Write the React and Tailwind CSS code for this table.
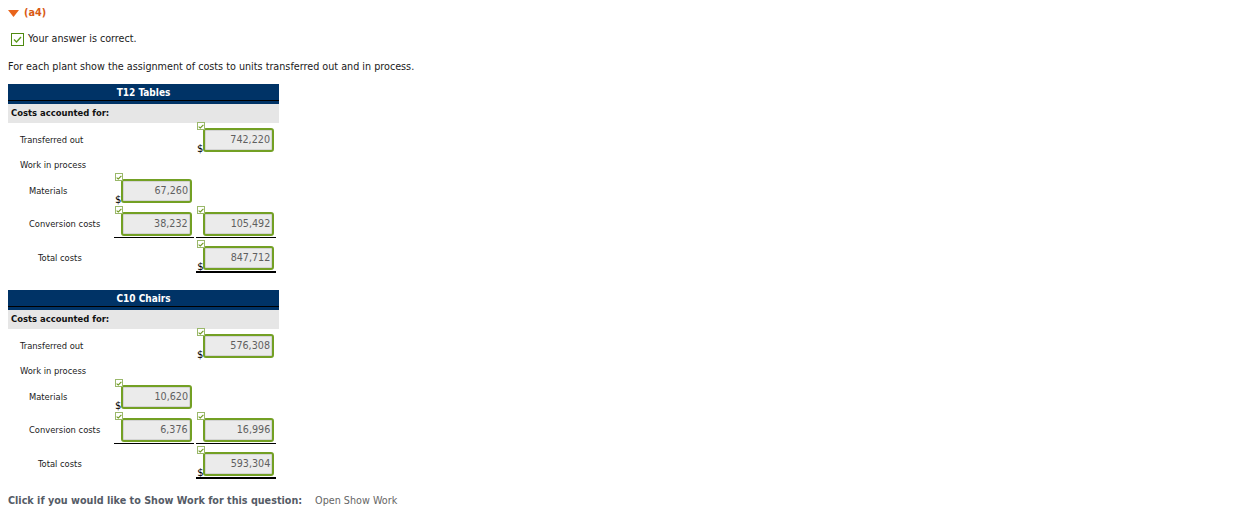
import React from "react";

const V = "font-['DejaVu_Sans',Verdana,sans-serif]";
const T = "font-['DejaVu_Sans_Condensed','DejaVu_Sans',sans-serif]";

function SmallCheck() {
  return (
    <span className="absolute top-0 left-[1px] w-[8px] h-[8px] border border-[#9ab86a] bg-white flex items-center justify-center z-10">
      <svg width="6" height="5" viewBox="0 0 6 5">
        <path d="M0.6 2.6 L2.3 4 L5.4 0.8" stroke="#6f9a1f" strokeWidth="1.1" fill="none" />
      </svg>
    </span>
  );
}

function Cell({ value, dollar, line }) {
  return (
    <div className="w-[83px]">
      <div className="relative pl-[7px] pt-[6px]">
        <SmallCheck />
        {dollar && (
          <span className={`absolute left-[1px] bottom-[-2px] text-[10px] leading-[10px] text-black ${V}`}>$</span>
        )}
        <div
          className={`w-[71px] h-[24px] border-2 border-[#73a024] rounded-[3px] bg-[#ebebeb] flex items-center justify-end pr-[2px] pt-[1px] text-[9.6px] text-[#5f5f5f] ${V} shadow-[inset_0_0_0_1px_#d4d4d4]`}
        >
          {value}
        </div>
      </div>
      {line === "single" && <div className="mt-[1px] h-[1px] w-[80px] bg-black" />}
      {line === "double" && <div className="mt-[1px] h-[2px] w-[80px] bg-black" />}
    </div>
  );
}

function Label({ children, indent }) {
  return (
    <div className={`w-[106px] ${indent} pt-[5px] h-[30px] flex items-center text-[9.3px] text-[#1a1a1a] ${T}`}>
      {children}
    </div>
  );
}

function Plant({ title, transferred, materials, conversion, wip, total }) {
  return (
    <div className="w-[271px]">
      <div className="h-[20px] bg-[#003366]">
        <div className={`h-[17px] border-b border-black flex items-center justify-center text-white font-bold text-[10px] ${T}`}>
          {title}
        </div>
      </div>
      <div className={`h-[19px] bg-[#e6e6e6] flex items-center pl-[3px] font-bold text-[9.4px] text-[#111] ${T}`}>
        Costs accounted for:
      </div>
      {/* Transferred out */}
      <div className="h-[35px] -mt-[1px] flex">
        <Label indent="pl-[12px]">Transferred out</Label>
        <div className="w-[82px]" />
        <Cell value={transferred} dollar />
      </div>
      {/* Work in process */}
      <div className={`h-[15px] flex items-center pl-[12px] text-[9.3px] text-[#1a1a1a] ${T}`}>
        Work in process
      </div>
      {/* Materials */}
      <div className="h-[34px] flex pt-[1px]">
        <Label indent="pl-[21px]">Materials</Label>
        <Cell value={materials} dollar />
      </div>
      {/* Conversion */}
      <div className="h-[34px] flex">
        <Label indent="pl-[21px]">Conversion costs</Label>
        <Cell value={conversion} line="single" />
        <Cell value={wip} line="single" />
      </div>
      {/* Total */}
      <div className="h-[35px] flex">
        <Label indent="pl-[30px]">Total costs</Label>
        <div className="w-[83px]" />
        <Cell value={total} dollar line="double" />
      </div>
    </div>
  );
}

export default function App() {
  return (
    <div className="w-[1247px] h-[527px] bg-white pl-[8px] pt-[6px]">
      <div className="flex items-center h-[14px]">
        <svg width="11" height="7" viewBox="0 0 11 7" className="mr-[5px]">
          <path d="M0 0 H11 L5.5 7 Z" fill="#e8641b" />
        </svg>
        <span className={`text-[9.7px] font-bold text-[#d95a14] ${V}`}>(a4)</span>
      </div>
      <div className="flex items-center mt-[12px] pl-[3px] h-[14px]">
        <span className="w-[13px] h-[13px] border border-[#4f8a10] bg-white flex items-center justify-center mr-[4px]">
          <svg width="9" height="7" viewBox="0 0 9 7">
            <path d="M1 3.5 L3.5 6 L8 1" stroke="#5a9a1a" strokeWidth="1.3" fill="none" />
          </svg>
        </span>
        <span className={`text-[9.6px] text-[#1a1a1a] ${V}`}>Your answer is correct.</span>
      </div>
      <div className={`mt-[15px] h-[12px] flex items-center text-[9.65px] text-[#1a1a1a] ${V}`}>
        For each plant show the assignment of costs to units transferred out and in process.
      </div>
      <div className="mt-[11px]">
        <Plant title="T12 Tables" transferred="742,220" materials="67,260" conversion="38,232" wip="105,492" total="847,712" />
      </div>
      <div className="mt-[15px]">
        <Plant title="C10 Chairs" transferred="576,308" materials="10,620" conversion="6,376" wip="16,996" total="593,304" />
      </div>
      <div className={`mt-[14px] flex items-center h-[12px] text-[9.65px] ${V}`}>
        <span className="font-bold text-[#555b66]">Click if you would like to Show Work for this question:</span>
        <span className="ml-[13px] text-[#666]">Open Show Work</span>
      </div>
    </div>
  );
}
